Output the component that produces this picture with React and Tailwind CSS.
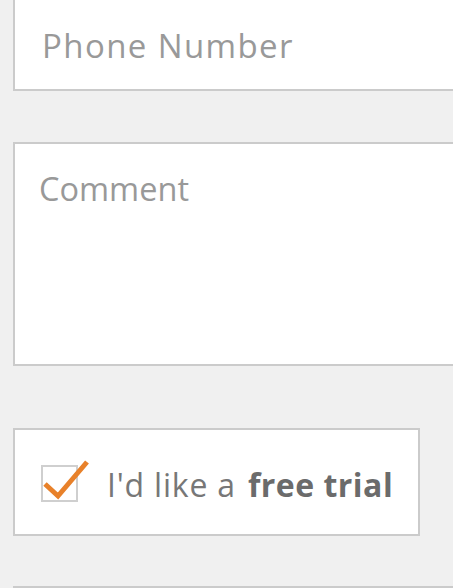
import React from "react";

function App() {
  return (
    <div className="w-[453px] h-[588px] overflow-hidden bg-[#f0f0f0] pl-[13px]">
      <div className="w-[460px] h-[91px] bg-white border-x-2 border-b-2 border-[#cbcbcb] flex items-center pl-[27px] pt-[2px]">
        <span className="text-[33px] leading-[40px] text-[#999999] font-['Open_Sans',sans-serif] tracking-[1.4px]">
          Phone Number
        </span>
      </div>
      <div className="mt-[51px] w-[460px] h-[224px] bg-white border-2 border-[#cbcbcb] pl-[24px] pt-[23px]">
        <span className="text-[32.5px] leading-[44px] text-[#999999] font-['Open_Sans',sans-serif]">
          Comment
        </span>
      </div>
      <div className="mt-[62px] w-[407px] h-[108px] bg-white border-2 border-[#cbcbcb] flex items-center pl-[26px]">
        <div className="relative w-[37px] h-[37px] border-2 border-[#cfcfcf] mt-[2px] shrink-0">
          <svg
            className="absolute -left-[4px] -top-[8px]"
            width="52"
            height="44"
            viewBox="0 0 52 44"
          >
            <path
              d="M6 25 L19 37 L48 3"
              fill="none"
              stroke="#e8812a"
              strokeWidth="5"
              strokeLinecap="butt"
              strokeLinejoin="miter"
            />
          </svg>
        </div>
        <span className="ml-[29px] mt-[6px] text-[32px] leading-[40px] text-[#777777] font-['Open_Sans',sans-serif] whitespace-nowrap flex items-baseline">
          <span className="tracking-[0.8px]">I'd like a</span>
          <span className="ml-[12px] font-bold text-[#6b6b6b] tracking-[0.5px]">free trial</span>
        </span>
      </div>
      <div className="mt-[50px] w-[460px] h-[40px] bg-white border-2 border-[#cbcbcb]"></div>
    </div>
  );
}

export default App;
